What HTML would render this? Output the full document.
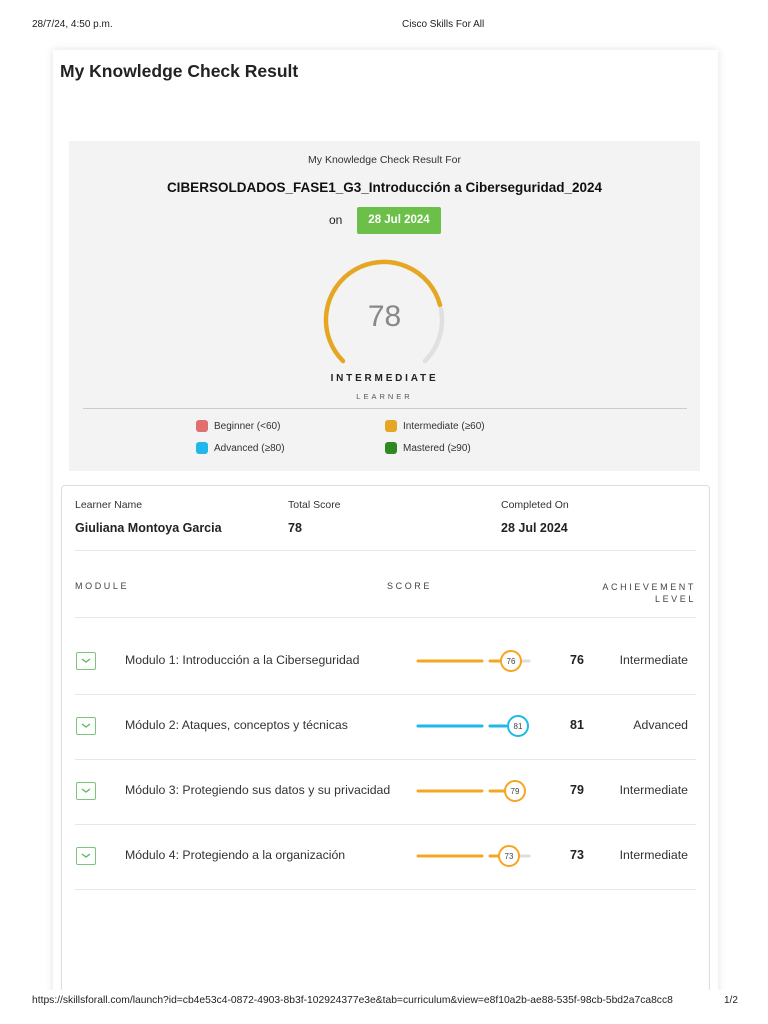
<!DOCTYPE html>
<html style="overflow:hidden;height:1024px"><head><meta charset="utf-8"><style>
*{margin:0;padding:0;box-sizing:border-box}
body{width:768px;height:1024px;background:#fff;font-family:"Liberation Sans",sans-serif;color:#222;position:relative;overflow:hidden}
.a{position:absolute}
.hdr{font-size:10px;color:#222;top:19px}
.card{left:53px;top:50px;width:665px;height:960px;background:#fff;box-shadow:0 0 8px rgba(0,0,0,.12)}
.panel{left:69px;top:141px;width:631px;height:330px;background:#f3f3f3}
.c{text-align:center;width:631px;left:0}
.leg{font-size:10px;color:#333;display:flex;align-items:center}
.leg i{display:inline-block;width:12px;height:12px;border-radius:3px;margin-right:6px}
.card2{left:61px;top:485px;width:649px;height:520px;border:1px solid #ddd;border-radius:4px}
.lbl{font-size:10.5px;color:#333}
.val{font-size:12.5px;font-weight:bold;color:#222}
.hd{font-size:9px;letter-spacing:2.6px;color:#444}
.line{left:75px;width:621px;height:1px;background:#e4e6ea}
.row{font-size:12.3px;color:#333}
.chk{left:76px;width:20px;height:18px;border:1px solid #7bc67a;border-radius:2px}
</style></head><body>
<div class="a hdr" style="left:32px">28/7/24, 4:50 p.m.</div>
<div class="a hdr" style="left:402px">Cisco Skills For All</div>
<div class="a card"></div>
<div class="a" style="left:60px;top:61px;font-size:17.5px;font-weight:bold;color:#222">My Knowledge Check Result</div>
<div class="a panel">
 <div class="a c" style="top:13px;font-size:10.5px;color:#333">My Knowledge Check Result For</div>
 <div class="a c" style="top:39px;font-size:13.5px;font-weight:bold;color:#111">CIBERSOLDADOS_FASE1_G3_Introducción a Ciberseguridad_2024</div>
 <div class="a" style="left:260px;top:72px;font-size:12px">on</div>
 <div class="a" style="left:288px;top:66px;width:84px;height:27px;background:#6cc04a;border-radius:2px;color:#fff;font-size:11.5px;font-weight:bold;text-align:center;line-height:27px">28 Jul 2024</div>
 <div class="a c" style="top:159px;font-size:30px;color:#888">78</div>
 <div class="a c" style="top:232px;font-size:10px;font-weight:bold;letter-spacing:2.8px;color:#222">INTERMEDIATE</div>
 <div class="a c" style="top:251px;font-size:7.5px;letter-spacing:3px;color:#555">LEARNER</div>
 <div class="a" style="left:14px;top:267px;width:604px;height:1px;background:#ccc"></div>
 <div class="a leg" style="left:127px;top:279px"><i style="background:#e07070"></i>Beginner (&lt;60)</div>
 <div class="a leg" style="left:316px;top:279px"><i style="background:#e5a624"></i>Intermediate (≥60)</div>
 <div class="a leg" style="left:127px;top:301px"><i style="background:#1fb8ea"></i>Advanced (≥80)</div>
 <div class="a leg" style="left:316px;top:301px"><i style="background:#2d8a1e"></i>Mastered (≥90)</div>
</div>
<svg class="a" style="left:0;top:0" width="768" height="1024">
 <path d="M343 361 A58 58 0 1 1 440 305" fill="none" stroke="#e5a624" stroke-width="4.5" stroke-linecap="round"/>
 <path d="M441 309 A58 58 0 0 1 425 361" fill="none" stroke="#e0e0e0" stroke-width="4.5" stroke-linecap="round"/>
</svg>
<div class="a card2"></div>
<div class="a lbl" style="left:75px;top:499px">Learner Name</div>
<div class="a lbl" style="left:288px;top:499px">Total Score</div>
<div class="a lbl" style="left:501px;top:499px">Completed On</div>
<div class="a val" style="left:75px;top:521px">Giuliana Montoya Garcia</div>
<div class="a val" style="left:288px;top:521px">78</div>
<div class="a val" style="left:501px;top:521px">28 Jul 2024</div>
<div class="a line" style="top:550px"></div>
<div class="a hd" style="left:75px;top:581px">MODULE</div>
<div class="a hd" style="left:387px;top:581px">SCORE</div>
<div class="a hd" style="left:560px;top:581px;width:136px;text-align:right;line-height:12px">ACHIEVEMENT<br>LEVEL</div>
<div class="a line" style="top:617px"></div>

<svg class="a" style="left:0;top:0" width="768" height="1024">
 <g fill="none" stroke-width="3" stroke-linecap="round">
  <line x1="418" y1="661" x2="482" y2="661" stroke="#f5a623"/><line x1="490" y1="661" x2="500" y2="661" stroke="#f5a623"/><line x1="522" y1="661" x2="529" y2="661" stroke="#ddd"/>
  <line x1="418" y1="726" x2="482" y2="726" stroke="#1fb8ea"/><line x1="490" y1="726" x2="506" y2="726" stroke="#1fb8ea"/>
  <line x1="418" y1="791" x2="482" y2="791" stroke="#f5a623"/><line x1="490" y1="791" x2="504" y2="791" stroke="#f5a623"/>
  <line x1="418" y1="856" x2="482" y2="856" stroke="#f5a623"/><line x1="490" y1="856" x2="498" y2="856" stroke="#f5a623"/><line x1="520" y1="856" x2="529" y2="856" stroke="#ddd"/>
 </g>
 <g fill="#fff" stroke-width="2">
  <circle cx="511" cy="661" r="10" stroke="#f5a623"/>
  <circle cx="518" cy="726" r="10" stroke="#1fb8ea"/>
  <circle cx="515" cy="791" r="10" stroke="#f5a623"/>
  <circle cx="509" cy="856" r="10" stroke="#f5a623"/>
 </g>
 <g font-family="Liberation Sans" font-size="8" fill="#444" text-anchor="middle">
  <text x="511" y="664">76</text><text x="518" y="729">81</text><text x="515" y="794">79</text><text x="509" y="859">73</text>
 </g>
 <g fill="none" stroke="#5cb85c" stroke-width="1.3">
  <path d="M82 659 l4 3 l4 -3"/><path d="M82 724 l4 3 l4 -3"/><path d="M82 789 l4 3 l4 -3"/><path d="M82 854 l4 3 l4 -3"/>
 </g>
</svg>
<div class="a chk" style="top:652px"></div>
<div class="a chk" style="top:717px"></div>
<div class="a chk" style="top:782px"></div>
<div class="a chk" style="top:847px"></div>
<div class="a row" style="left:125px;top:653px">Modulo 1: Introducción a la Ciberseguridad</div>
<div class="a row" style="left:125px;top:718px">Módulo 2: Ataques, conceptos y técnicas</div>
<div class="a row" style="left:125px;top:783px">Módulo 3: Protegiendo sus datos y su privacidad</div>
<div class="a row" style="left:125px;top:848px">Módulo 4: Protegiendo a la organización</div>
<div class="a val" style="left:570px;top:653px">76</div>
<div class="a val" style="left:570px;top:718px">81</div>
<div class="a val" style="left:570px;top:783px">79</div>
<div class="a val" style="left:570px;top:848px">73</div>
<div class="a row" style="left:588px;width:100px;text-align:right;top:653px">Intermediate</div>
<div class="a row" style="left:588px;width:100px;text-align:right;top:718px">Advanced</div>
<div class="a row" style="left:588px;width:100px;text-align:right;top:783px">Intermediate</div>
<div class="a row" style="left:588px;width:100px;text-align:right;top:848px">Intermediate</div>
<div class="a line" style="top:694px"></div>
<div class="a line" style="top:759px"></div>
<div class="a line" style="top:824px"></div>
<div class="a line" style="top:889px"></div>

<div class="a" style="left:0;top:990px;width:768px;height:34px;background:#fff"></div>
<div class="a hdr" style="left:32px;top:995px;font-size:10.3px">https://skillsforall.com/launch?id=cb4e53c4-0872-4903-8b3f-102924377e3e&amp;tab=curriculum&amp;view=e8f10a2b-ae88-535f-98cb-5bd2a7ca8cc8</div>
<div class="a hdr" style="left:724px;top:995px;font-size:10px">1/2</div>
</body></html>
